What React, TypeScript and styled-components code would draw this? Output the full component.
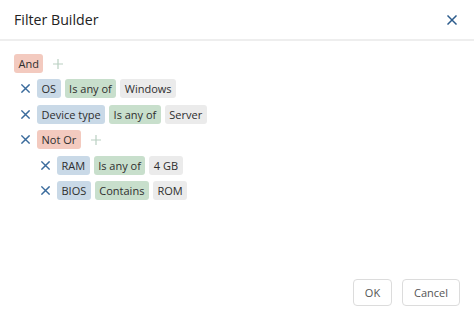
import React from "react";
import styled, { createGlobalStyle } from "styled-components";

const Global = createGlobalStyle`
  html, body { margin: 0; padding: 0; background: #fff; }
  body { font-family: "Open Sans", "Noto Sans", sans-serif; color: #333; }
`;

const Dialog = styled.div`
  width: 474px;
  height: 315px;
  display: flex;
  flex-direction: column;
  background: #fff;
  box-sizing: border-box;
`;

const Header = styled.div`
  height: 41px;
  display: flex;
  align-items: center;
  justify-content: space-between;
  padding: 0 17px 0 14px;
  border-bottom: 2px solid #eeeeee;
  box-sizing: border-box;
`;

const Title = styled.div`
  font-size: 14.2px;
  color: #222;
`;

const CloseBtn = styled.div`
  color: #2c5c8c;
  display: flex;
  align-items: center;
`;

const Body = styled.div`
  flex: 1;
  padding: 13px 14px 0;
  display: flex;
  flex-direction: column;
  gap: 6.4px;
`;

const Row = styled.div<{ $indent: number }>`
  display: flex;
  align-items: center;
  gap: 4px;
  height: 19px;
  padding-left: ${(p) => p.$indent}px;
`;

const colors: Record<string, string> = {
  group: "#f3cabf",
  field: "#c9d9e7",
  op: "#c8dfcc",
  value: "#ebebeb",
};

const Pill = styled.span<{ $kind: string }>`
  background: ${(p) => colors[p.$kind]};
  border-radius: 3px;
  height: 19px;
  line-height: 19px;
  padding: 0 4.5px;
  font-size: 11px;
  color: #2e2e2e;
  white-space: nowrap;
`;

const Remove = styled.span`
  width: 12px;
  display: flex;
  align-items: center;
  color: #3a6b9c;
`;

const Add = styled.span`
  margin-left: 6px;
  color: #b9d0c2;
  display: flex;
  align-items: center;
`;

const Footer = styled.div`
  display: flex;
  justify-content: flex-end;
  gap: 10px;
  padding: 0 14px 9px;
`;

const Button = styled.div<{ $w: number }>`
  width: ${(p) => p.$w}px;
  height: 27px;
  box-sizing: border-box;
  border: 1px solid #dcdcdc;
  border-radius: 4px;
  display: flex;
  align-items: center;
  justify-content: center;
  font-size: 11px;
  color: #555;
`;

const XIcon = ({ size = 10, w = 1.6 }: { size?: number; w?: number }) => (
  <svg width={size} height={size} viewBox="0 0 10 10">
    <path d="M1 1 L9 9 M9 1 L1 9" stroke="currentColor" strokeWidth={w} strokeLinecap="square" />
  </svg>
);

const PlusIcon = () => (
  <svg width="10" height="10" viewBox="0 0 10 10">
    <path d="M5 0 V10 M0 5 H10" stroke="currentColor" strokeWidth="1.2" />
  </svg>
);

type R = { indent: number; remove: boolean; pills: [string, string][]; add?: boolean };

const rows: R[] = [
  { indent: 0, remove: false, pills: [["group", "And"]], add: true },
  { indent: 7, remove: true, pills: [["field", "OS"], ["op", "Is any of"], ["value", "Windows"]] },
  { indent: 7, remove: true, pills: [["field", "Device type"], ["op", "Is any of"], ["value", "Server"]] },
  { indent: 7, remove: true, pills: [["group", "Not Or"]], add: true },
  { indent: 27, remove: true, pills: [["field", "RAM"], ["op", "Is any of"], ["value", "4 GB"]] },
  { indent: 27, remove: true, pills: [["field", "BIOS"], ["op", "Contains"], ["value", "ROM"]] },
];

export default function App() {
  return (
    <Dialog>
      <Global />
      <Header>
        <Title>Filter Builder</Title>
        <CloseBtn>
          <XIcon size={10} w={1.5} />
        </CloseBtn>
      </Header>
      <Body>
        {rows.map((r, i) => (
          <Row key={i} $indent={r.indent}>
            {r.remove && (
              <Remove>
                <XIcon size={9} w={1.6} />
              </Remove>
            )}
            {r.pills.map(([k, t], j) => (
              <Pill key={j} $kind={k}>
                {t}
              </Pill>
            ))}
            {r.add && (
              <Add>
                <PlusIcon />
              </Add>
            )}
          </Row>
        ))}
      </Body>
      <Footer>
        <Button $w={39}>OK</Button>
        <Button $w={58}>Cancel</Button>
      </Footer>
    </Dialog>
  );
}
